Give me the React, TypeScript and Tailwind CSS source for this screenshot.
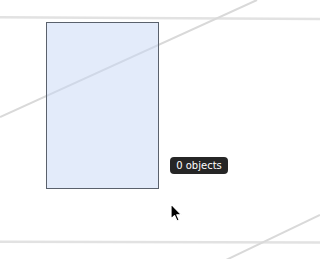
import React from 'react';

// Canvas guide lines (drawing, not layout)
const GuideLines: React.FC = () => (
  <svg className="absolute inset-0" width={320} height={259} viewBox="0 0 320 259">
    <line x1={0} y1={17.3} x2={320} y2={19} stroke="#e2e2e2" strokeWidth={2.5} />
    <line x1={0} y1={117} x2={257} y2={0} stroke="#d9d9d9" strokeWidth={2} />
    <line x1={0} y1={241.8} x2={320} y2={242.6} stroke="#e2e2e2" strokeWidth={2.5} />
    <line x1={226} y1={260} x2={320} y2={215} stroke="#d9d9d9" strokeWidth={2} />
  </svg>
);

const Cursor: React.FC = () => (
  <svg className="absolute left-[168px] top-[202px]" width={15} height={21} viewBox="0 0 15 21">
    <path
      d="M3 2 L3 17 L6.5 13.6 L9 19 L11.2 18 L8.8 12.8 L13.5 12.8 Z"
      fill="#000"
      stroke="#fff"
      strokeWidth={1.2}
      strokeLinejoin="round"
    />
  </svg>
);

export default function App() {
  return (
    <div className="relative h-[259px] w-[320px] overflow-hidden bg-white">
      <GuideLines />

      {/* selection box */}
      <div className="absolute left-[46px] top-[22px] h-[167px] w-[113px] border border-[#5a616c] bg-[#c8d8f5]/50" />

      {/* count tooltip */}
      <div
        className="absolute left-[170px] top-[157px] flex h-[17px] w-[58px] items-center justify-center rounded-[4px] bg-[#262626] text-[10px] text-white"
        style={{ fontFamily: '"DejaVu Sans", sans-serif' }}
      >
        0 objects
      </div>

      <Cursor />
    </div>
  );
}
